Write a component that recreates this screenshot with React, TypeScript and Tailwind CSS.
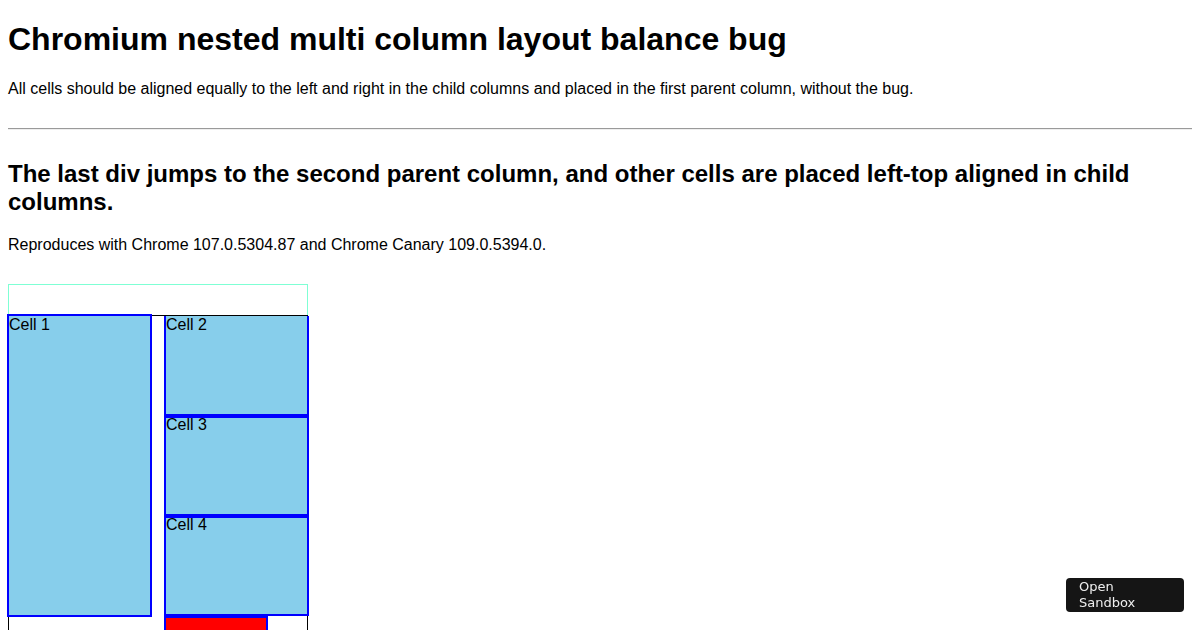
export default function App() {
  return (
    <div className="min-h-screen bg-white px-2 text-black font-['Liberation_Sans',Arial,sans-serif]">
      <h1 className="mt-[21px] mb-[22px] text-[32px] font-bold leading-[1.15]">
        Chromium nested multi column layout balance bug
      </h1>
      <p className="text-[16px] leading-[1.15]">
        All cells should be aligned equally to the left and right in the child columns and placed in the first
        parent column, without the bug.
      </p>

      <hr className="my-[30px] h-0 border-t border-b border-t-[#9a9a9a] border-b-[#eeeeee]" />

      <h2 className="mb-[21px] text-[24px] font-bold leading-[1.15]">
        The last div jumps to the second parent column, and other cells are placed left-top aligned in child
        columns.
      </h2>
      <p className="text-[16px] leading-[1.15]">
        Reproduces with Chrome 107.0.5304.87 and Chrome Canary 109.0.5394.0.
      </p>

      {/* Test case */}
      <div className="mt-[29px] w-[300px]">
        <div className="h-[31px] border-t border-x border-[#7fffd4]" />
        <div className="h-[360px] border border-black">
          <div className="-ml-[2px] -mt-[2px] flex gap-[12px] text-[16px] leading-[1.15]">
            <div className="h-[303px] w-[145px] shrink-0 border-2 border-[#0000ff] bg-[#87ceeb]">Cell 1</div>
            <div className="mt-[2px] flex w-[145px] shrink-0 flex-col">
              <div className="h-[100px] border-2 border-t-0 border-[#0000ff] bg-[#87ceeb]">Cell 2</div>
              <div className="h-[100px] border-2 border-[#0000ff] bg-[#87ceeb]">
                <div className="-mt-[2px]">Cell 3</div>
              </div>
              <div className="h-[100px] border-2 border-[#0000ff] bg-[#87ceeb]">
                <div className="-mt-[2px]">Cell 4</div>
              </div>
              <div className="h-[40px] w-[104px] border-2 border-[#0000ff] bg-[#ff0000]" />
            </div>
          </div>
        </div>
      </div>

      <button
        type="button"
        className="fixed bottom-[18px] right-[16px] h-[34px] w-[118px] rounded-[4px] bg-[#151515] px-[13px] text-left font-['DejaVu_Sans',sans-serif] text-[13px] leading-4 text-[#eeeeee]"
      >
        Open
        <br />
        Sandbox
      </button>
    </div>
  );
}
